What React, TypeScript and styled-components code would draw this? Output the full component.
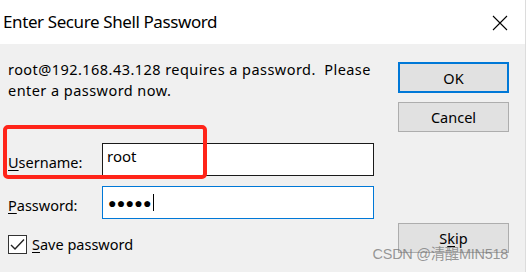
import * as React from 'react'
import styled, { createGlobalStyle } from 'styled-components'

const GlobalStyle = createGlobalStyle`
  html, body {
    margin: 0;
    padding: 0;
    background: #f0f0f0;
  }
  body {
    font-family: 'Noto Sans', 'Open Sans', sans-serif;
    color: #000;
  }
`

const Window = styled.div`
  position: relative;
  width: 526px;
  height: 272px;
  background: #f0f0f0;
  border-right: 1px solid #dcdcdc;
  box-sizing: border-box;
  overflow: hidden;
`

const TitleBar = styled.div`
  height: 44px;
  background: #fff;
  display: flex;
  align-items: center;
  justify-content: space-between;
  padding: 0 17px 0 3px;
`

const Title = styled.div`
  font-size: 17px;
  letter-spacing: -0.4px;
  margin-top: -2px;
`

const Body = styled.div`
  display: flex;
  padding: 0 0 0 8px;
`

const Main = styled.div`
  width: 366px;
  display: flex;
  flex-direction: column;
`

const Message = styled.p`
  margin: 15px 0 0;
  font-size: 14.5px;
  letter-spacing: 0.45px;
  line-height: 21px;
  white-space: nowrap;
`

const FieldRow = styled.div<{ gap?: number }>`
  display: flex;
  align-items: center;
  margin-top: ${(p) => p.gap || 0}px;
`

const Label = styled.label`
  width: 94px;
  font-size: 14.5px;
  padding-top: 4px;
`

const Key = styled.span`
  text-decoration: underline;
  text-underline-offset: 2px;
`

const Input = styled.div<{ focused?: boolean }>`
  width: 272px;
  height: 33px;
  box-sizing: border-box;
  background: #fff;
  border: 1px solid ${(p) => (p.focused ? '#0078d7' : '#1a1a1a')};
  display: flex;
  align-items: center;
  padding-left: 4px;
  font-size: 15px;
`

const InputText = styled.span`
  margin-top: -8px;
`

const Dots = styled.span`
  font-size: 14px;
  letter-spacing: 0.3px;
  margin-left: 1px;
`

const Caret = styled.span`
  display: inline-block;
  width: 1px;
  height: 17px;
  background: #000;
  margin-left: 1px;
`

const CheckRow = styled.div`
  display: flex;
  align-items: center;
  margin-top: 15px;
  font-size: 14.5px;
`

const Box = styled.div`
  width: 19px;
  height: 19px;
  box-sizing: border-box;
  border: 1px solid #333;
  background: #fff;
  display: flex;
  align-items: center;
  justify-content: center;
  margin-right: 5px;
`

const Buttons = styled.div`
  margin-left: 24px;
  width: 111px;
  display: flex;
  flex-direction: column;
`

const Button = styled.div<{ primary?: boolean; top: number }>`
  height: ${(p) => (p.primary ? 31 : 30)}px;
  margin-top: ${(p) => p.top}px;
  box-sizing: border-box;
  background: #e1e1e1;
  border: ${(p) => (p.primary ? '2px solid #0078d7' : '1px solid #adadad')};
  display: flex;
  align-items: center;
  justify-content: center;
  font-size: 14.5px;
`

const Annotation = styled.div`
  position: absolute;
  left: 3px;
  top: 125px;
  width: 204px;
  height: 54px;
  box-sizing: border-box;
  border: 4px solid #ff2419;
  border-radius: 5px;
  pointer-events: none;
`

const Watermark = styled.div`
  position: absolute;
  right: 17px;
  bottom: 9px;
  font-family: 'Liberation Sans', 'Noto Sans CJK SC', sans-serif;
  font-size: 14.5px;
  color: rgba(110, 110, 110, 0.7);
  letter-spacing: -0.3px;
`

export default function App() {
  return (
    <>
      <GlobalStyle />
      <Window>
        <TitleBar>
          <Title>Enter Secure Shell Password</Title>
          <svg width="16" height="16" viewBox="0 0 16 16" style={{ marginTop: 2 }}>
            <path d="M1 1 L15 15 M15 1 L1 15" stroke="#000" strokeWidth="1.1" />
          </svg>
        </TitleBar>
        <Body>
          <Main>
            <Message>
              root@192.168.43.128 requires a password.&nbsp; Please
              <br />
              enter a password now.
            </Message>
            <FieldRow gap={42}>
              <Label>
                <Key>U</Key>sername:
              </Label>
              <Input>
                <InputText>root</InputText>
              </Input>
            </FieldRow>
            <FieldRow gap={10}>
              <Label>
                <Key>P</Key>assword:
              </Label>
              <Input focused>
                <Dots>●●●●●</Dots>
                <Caret />
              </Input>
            </FieldRow>
            <CheckRow>
              <Box>
                <svg width="15" height="13" viewBox="0 0 15 13">
                  <path d="M1 7 L5 11 L14 1.5" fill="none" stroke="#222" strokeWidth="1.4" />
                </svg>
              </Box>
              <span>
                <Key>S</Key>ave password
              </span>
            </CheckRow>
          </Main>
          <Buttons>
            <Button primary top={18}>OK</Button>
            <Button top={9}>Cancel</Button>
            <Button top={91}>
              <span>
                S<Key>k</Key>ip
              </span>
            </Button>
          </Buttons>
        </Body>
        <Annotation />
        <Watermark>CSDN @清醒MIN518</Watermark>
      </Window>
    </>
  )
}
